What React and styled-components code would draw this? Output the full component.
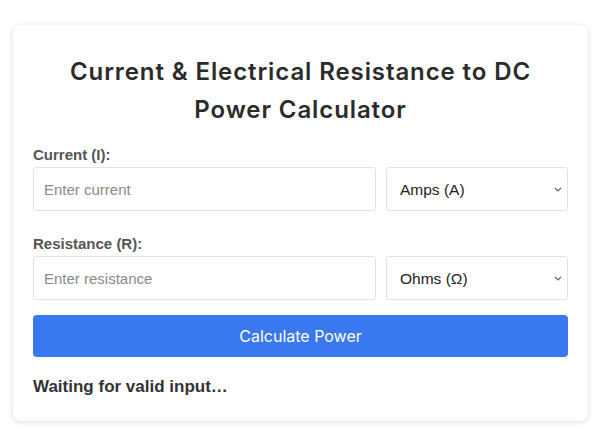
import React from "react";
import styled, { createGlobalStyle } from "styled-components";

const Global = createGlobalStyle`
  * { box-sizing: border-box; }
  body { margin: 0; background: #ffffff; font-family: "Liberation Sans", Arial, sans-serif; }
`;

const Page = styled.div`
  padding: 25px 12px 13px 13px;
`;

const Card = styled.div`
  background: #fff;
  border-radius: 8px;
  box-shadow: 0 1px 6px rgba(0, 0, 0, 0.14);
  padding: 28px 20px 24px 20px;
`;

const Title = styled.h1`
  margin: 0 0 17px 0;
  text-align: center;
  font-family: "Inter", "Noto Sans", sans-serif;
  font-weight: 600;
  font-size: 24px;
  letter-spacing: 0.9px;
  line-height: 38px;
  color: #2b2b2b;
  padding: 0 20px;
`;

const Label = styled.label`
  display: block;
  font-weight: bold;
  font-size: 15px;
  line-height: 17px;
  color: #555;
  margin-bottom: 4px;
`;

const Row = styled.div`
  display: flex;
  gap: 10px;
  margin-bottom: ${(p) => p.$mb || 0}px;
`;

const Input = styled.input`
  flex: 1;
  min-width: 0;
  height: 44px;
  border: 1px solid #e3e3e3;
  border-radius: 3px;
  padding: 0 10px;
  font-family: "Liberation Sans", Arial, sans-serif;
  font-size: 15px;
  color: #333;
  &::placeholder { color: #8a8a8a; }
`;

const Select = styled.select`
  width: 182px;
  height: 44px;
  border: 1px solid #e3e3e3;
  border-radius: 3px;
  background: #fff;
  padding: 0 13px;
  font-family: "Liberation Sans", Arial, sans-serif;
  font-size: 15.5px;
  color: #222;
  appearance: none;
  background-image: url("data:image/svg+xml;utf8,<svg xmlns='http://www.w3.org/2000/svg' width='8' height='5' viewBox='0 0 8 5'><path d='M1 1l3 3 3-3' fill='none' stroke='%23666' stroke-width='1.2'/></svg>");
  background-repeat: no-repeat;
  background-position: right 5px center;
`;

const Button = styled.button`
  display: block;
  width: 100%;
  height: 42px;
  border: none;
  border-radius: 4px;
  background: #3a78f0;
  color: #fff;
  font-family: "Inter", "Noto Sans", sans-serif;
  font-size: 16px;
  margin-top: 15px;
`;

const Status = styled.div`
  margin-top: 20px;
  font-weight: bold;
  font-size: 17px;
  line-height: 20px;
  color: #333;
`;

export default function App() {
  return (
    <>
      <Global />
      <Page>
        <Card>
          <Title>Current &amp; Electrical Resistance to DC Power Calculator</Title>
          <Label>Current (I):</Label>
          <Row $mb={24}>
            <Input placeholder="Enter current" />
            <Select defaultValue="A">
              <option value="A">Amps (A)</option>
            </Select>
          </Row>
          <Label>Resistance (R):</Label>
          <Row>
            <Input placeholder="Enter resistance" />
            <Select defaultValue="O">
              <option value="O">Ohms (Ω)</option>
            </Select>
          </Row>
          <Button>Calculate Power</Button>
          <Status>Waiting for valid input…</Status>
        </Card>
      </Page>
    </>
  );
}
